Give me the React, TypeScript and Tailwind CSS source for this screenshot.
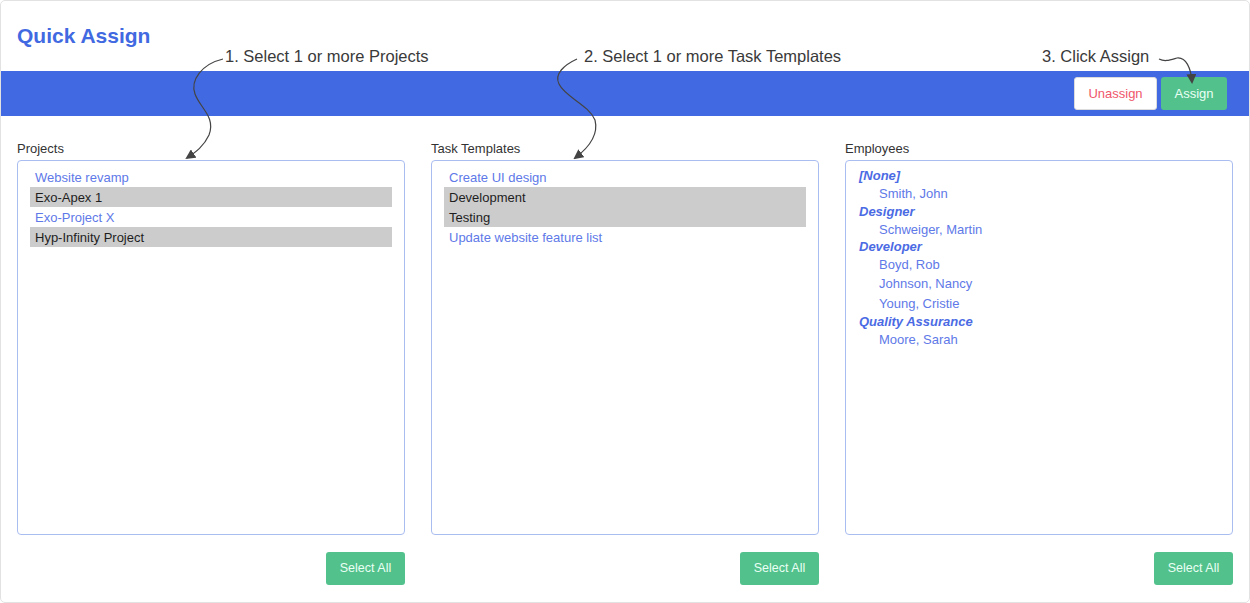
import React from "react";

const font = { fontFamily: '"Liberation Sans", Arial, sans-serif' };

function ListBox({ items }: { items: { label: string; selected?: boolean }[] }) {
  return (
    <div className="h-[375px] border border-[#a9bdf0] rounded-[4px] bg-white px-[12px] pt-[6px]">
      {items.map((it) => (
        <div
          key={it.label}
          className={
            "h-[20px] leading-[21px] pl-[5px] text-[13px] " +
            (it.selected ? "bg-[#cccccc] text-[#1e1e1e]" : "text-[#6079e8]")
          }
        >
          {it.label}
        </div>
      ))}
    </div>
  );
}

type Row = { label: string; header?: boolean; h: number };

function EmployeeBox({ rows }: { rows: Row[] }) {
  return (
    <div className="h-[375px] border border-[#a9bdf0] rounded-[4px] bg-white px-[13px] pt-[6px]">
      {rows.map((r) => (
        <div
          key={r.label}
          style={{ height: r.h, lineHeight: r.h + 1 + "px" }}
          className={
            r.header
              ? "text-[13px] font-bold italic text-[#4b6be4]"
              : "text-[13px] pl-[20px] text-[#6079e8]"
          }
        >
          {r.label}
        </div>
      ))}
    </div>
  );
}

function Column({ label, children }: { label: string; children: React.ReactNode }) {
  return (
    <div className="flex flex-col">
      <div className="h-[15px] leading-[16px] text-[13px] text-[#333] mb-[4px]">{label}</div>
      {children}
      <div className="flex justify-end mt-[17px]">
        <button className="w-[79px] h-[33px] rounded-[3px] bg-[#52c18b] text-[#eafff4] text-[12.5px]">
          Select All
        </button>
      </div>
    </div>
  );
}

export default function App() {
  const employees: Row[] = [
    { label: "[None]", header: true, h: 17 },
    { label: "Smith, John", h: 18 },
    { label: "Designer", header: true, h: 18 },
    { label: "Schweiger, Martin", h: 18 },
    { label: "Developer", header: true, h: 17 },
    { label: "Boyd, Rob", h: 18 },
    { label: "Johnson, Nancy", h: 20 },
    { label: "Young, Cristie", h: 20 },
    { label: "Quality Assurance", header: true, h: 17 },
    { label: "Moore, Sarah", h: 18 },
  ];
  return (
    <div style={font} className="w-[1250px] h-[603px] bg-white">
      <div className="relative w-[1250px] h-[603px] border border-[#e2e2e2] rounded-[5px] bg-white">
        <div className="h-[70px] pt-[23px] pl-[16px]">
          <div className="text-[21px] leading-[24px] font-bold text-[#4169e1]">Quick Assign</div>
        </div>
        <div className="h-[45px] bg-[#4169e1] flex justify-end items-center gap-[4px] pr-[22px]">
          <button className="w-[83px] h-[33px] rounded-[3px] bg-white border border-[#dcdcdc] text-[#f0566b] text-[13px]">
            Unassign
          </button>
          <button className="w-[66px] h-[33px] rounded-[3px] bg-[#52c18b] text-[#eafff4] text-[13px]">
            Assign
          </button>
        </div>
        <div className="grid grid-cols-3 gap-[26px] pl-[16px] pr-[16px] pt-[25px]">
          <Column label="Projects">
            <ListBox
              items={[
                { label: "Website revamp" },
                { label: "Exo-Apex 1", selected: true },
                { label: "Exo-Project X" },
                { label: "Hyp-Infinity Project", selected: true },
              ]}
            />
          </Column>
          <Column label="Task Templates">
            <ListBox
              items={[
                { label: "Create UI design" },
                { label: "Development", selected: true },
                { label: "Testing", selected: true },
                { label: "Update website feature list" },
              ]}
            />
          </Column>
          <Column label="Employees">
            <EmployeeBox rows={employees} />
          </Column>
        </div>

        {/* annotations */}
        <div className="absolute left-[224px] top-[45px] text-[16.5px] leading-[20px] text-[#3a3a3a] whitespace-nowrap">
          1. Select 1 or more Projects
        </div>
        <div className="absolute left-[583px] top-[45px] text-[16.5px] leading-[20px] text-[#3a3a3a] whitespace-nowrap">
          2. Select 1 or more Task Templates
        </div>
        <div className="absolute left-[1041px] top-[45px] text-[16.5px] leading-[20px] text-[#3a3a3a] whitespace-nowrap">
          3. Click Assign
        </div>
        <svg
          className="absolute left-0 top-0 pointer-events-none"
          width="1250"
          height="603"
          viewBox="-1 -1 1250 603"
        >
          <defs>
            <marker id="ah" markerWidth="10" markerHeight="10" refX="8" refY="5" orient="auto" markerUnits="userSpaceOnUse">
              <path d="M0,0 L10,5 L0,10 Z" fill="#444" />
            </marker>
          </defs>
          <path
            d="M221 57 C 200 62, 188 78, 193 92 C 198 106, 214 115, 207 133 C 202 144, 194 150, 185 156"
            fill="none"
            stroke="#444"
            strokeWidth="1.2"
            markerEnd="url(#ah)"
          />
          <path
            d="M575 57 C 562 63, 552 72, 557 82 C 563 95, 587 103, 593 118 C 597 134, 585 147, 573 156"
            fill="none"
            stroke="#444"
            strokeWidth="1.2"
            markerEnd="url(#ah)"
          />
          <path
            d="M1157 57 C 1163 60, 1168 58, 1175 56 C 1184 55, 1189 66, 1190 80"
            fill="none"
            stroke="#444"
            strokeWidth="1.2"
            markerEnd="url(#ah)"
          />
        </svg>
      </div>
    </div>
  );
}
